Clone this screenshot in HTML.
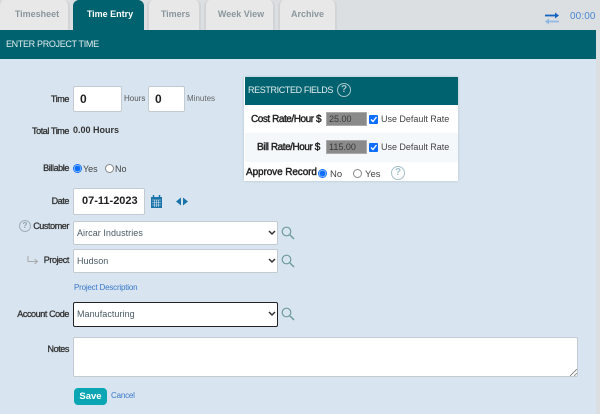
<!DOCTYPE html>
<html><head><meta charset="utf-8">
<style>
*{box-sizing:border-box}
html,body{margin:0;padding:0;width:600px;height:414px;overflow:hidden;background:#dcdfe2;font-family:"Liberation Sans",sans-serif}
#w{position:absolute;left:0;top:0;width:600px;height:414px;filter:blur(.25px)}
.a{position:absolute;white-space:nowrap}
.tab{position:absolute;top:0;height:30px;background:#e8e8e8;border:2px solid #d2d4d6;border-top:0;border-bottom:0;border-top-left-radius:6px;border-top-right-radius:6px;text-align:center;font-size:9px;font-weight:bold;color:#8a979d;line-height:28px}
.lbl{position:absolute;font-size:9px;color:#333;white-space:nowrap;text-align:right;right:531px;letter-spacing:-.4px;-webkit-text-stroke:.3px #333}
.b{font-size:10px;color:#222;-webkit-text-stroke:.4px #222}
.inp{position:absolute;background:#fff;border:1px solid #c4cbd0;border-radius:2px}
.sel{position:absolute;left:73px;width:205px;background:#fff;border:1px solid #c4cbd0;border-radius:2px;font-size:9px;letter-spacing:.05px;color:#4a5a64;line-height:23px;padding-left:3px}
</style></head><body><div id="w">
<div class="tab" style="left:-2px;width:72px;padding-left:6px">Timesheet</div>
<div class="tab" style="left:73px;width:71px;background:#00626f;border-color:#00626f;color:#fff;padding-left:3px">Time Entry</div>
<div class="tab" style="left:147px;width:54px;padding-left:3px">Timers</div>
<div class="tab" style="left:204px;width:71px;padding-left:3px">Week View</div>
<div class="tab" style="left:278px;width:59px">Archive</div>
<svg class="a" style="left:544px;top:11px" width="16" height="16" viewBox="0 0 16 16"><path d="M1 4.500H12" stroke="#1565c0" stroke-width="1.800"/><path d="M11 1.500L15 4.500L11 7.500Z" fill="#1565c0"/><path d="M5 10.500H15" stroke="#90b8e0" stroke-width="1.800"/><path d="M5 7.500L1 10.500L5 13.500Z" fill="#90b8e0"/></svg>
<div class="a" style="left:570px;top:11px;font-size:10px;color:#4a86d0;letter-spacing:.1px">00:00</div>
<div class="a" style="left:0;top:30px;width:596px;height:384px;background:#d8e5f1"></div>
<div class="a" style="left:0;top:30px;width:596px;height:29px;background:#00626f;color:#e4eef0;font-size:9px;line-height:28px;padding-left:6px;letter-spacing:-.33px">ENTER PROJECT TIME</div>

<div class="lbl" style="top:94px">Time</div>
<div class="inp" style="left:73px;top:86px;width:49px;height:26px;font-size:12px;font-weight:bold;color:#222;line-height:24px;padding-left:6px">0</div>
<div class="a" style="left:124px;top:94px;font-size:8px;color:#555">Hours</div>
<div class="inp" style="left:148px;top:86px;width:37px;height:26px;font-size:12px;font-weight:bold;color:#222;line-height:24px;padding-left:6px">0</div>
<div class="a" style="left:187px;top:94px;font-size:8px;color:#666">Minutes</div>
<div class="lbl" style="top:126px">Total Time</div>
<div class="a" style="left:73px;top:125px;font-size:9px;font-weight:bold;color:#333">0.00 Hours</div>

<div class="a" style="left:244px;top:77px;width:214px;height:104px;background:#fff;box-shadow:0 0 3px rgba(0,0,0,.15)"></div>
<div class="a" style="left:245px;top:77px;width:213px;height:28px;background:#00626f;color:#e4eef0;font-size:9px;line-height:27px;padding-left:3px;letter-spacing:-.38px">RESTRICTED FIELDS</div>
<div class="a" style="left:337px;top:83px;width:14px;height:14px;border:1.5px solid #a5c5cc;border-radius:50%;color:#a5c5cc;font-size:10px;font-weight:bold;line-height:11px;text-align:center">?</div>
<div class="a" style="left:245px;top:133px;width:213px;height:29px;background:#f5f8fa"></div>
<div class="a b" style="left:251px;top:114px;letter-spacing:-.45px">Cost Rate/Hour $</div>
<div class="a" style="left:326px;top:112px;width:41px;height:14px;background:#8a8a8a;border:1px solid #aaa;font-size:9px;color:#3a3a3a;line-height:12px;padding-left:2px">25.00</div>
<div class="a" style="left:369px;top:115px;width:9px;height:9px;background:#0d6efd;border-radius:1px"></div>
<svg class="a" style="left:369px;top:115px" width="9" height="9"><path d="M2 4.500L4 6.500L7.500 2" stroke="#fff" fill="none" stroke-width="1.300"/></svg>
<div class="a" style="left:381px;top:114px;font-size:9px;letter-spacing:-.02px;color:#444">Use Default Rate</div>
<div class="a b" style="left:257px;top:142px;letter-spacing:-.45px">Bill Rate/Hour $</div>
<div class="a" style="left:326px;top:140px;width:41px;height:14px;background:#8a8a8a;border:1px solid #aaa;font-size:9px;color:#3a3a3a;line-height:12px;padding-left:2px">115.00</div>
<div class="a" style="left:369px;top:143px;width:9px;height:9px;background:#0d6efd;border-radius:1px"></div>
<svg class="a" style="left:369px;top:143px" width="9" height="9"><path d="M2 4.500L4 6.500L7.500 2" stroke="#fff" fill="none" stroke-width="1.300"/></svg>
<div class="a" style="left:381px;top:142px;font-size:9px;letter-spacing:-.02px;color:#444">Use Default Rate</div>
<div class="a b" style="left:246px;top:167px;letter-spacing:-.1px">Approve Record</div>
<div class="a" style="left:318px;top:169px;width:9px;height:9px;border:1px solid #0d6efd;border-radius:50%;background:radial-gradient(circle,#0d6efd 2.800px,#fff 3.300px)"></div>
<div class="a" style="left:330px;top:169px;font-size:9.5px;color:#444">No</div>
<div class="a" style="left:353px;top:169px;width:9px;height:9px;border:1px solid #888;border-radius:50%;background:#fff"></div>
<div class="a" style="left:365px;top:169px;font-size:9.5px;color:#444">Yes</div>
<div class="a" style="left:391px;top:166px;width:14px;height:14px;border:1.5px solid #a5c0cc;border-radius:50%;color:#a5c0cc;font-size:10px;font-weight:bold;line-height:11px;text-align:center">?</div>

<div class="lbl" style="top:163px">Billable</div>
<div class="a" style="left:73px;top:164px;width:9px;height:9px;border:1px solid #0d6efd;border-radius:50%;background:radial-gradient(circle,#0d6efd 2.800px,#fff 3.300px)"></div>
<div class="a" style="left:83px;top:164px;font-size:9px;color:#444">Yes</div>
<div class="a" style="left:105px;top:164px;width:9px;height:9px;border:1px solid #888;border-radius:50%;background:#fff"></div>
<div class="a" style="left:115px;top:164px;font-size:9px;color:#444">No</div>

<div class="lbl" style="top:196px">Date</div>
<div class="inp" style="left:73px;top:188px;width:72px;height:27px;font-size:11px;font-weight:bold;color:#222;line-height:25px;padding-left:8px">07-11-2023</div>
<svg class="a" style="left:151px;top:195px" width="12" height="13" viewBox="0 0 12 13"><path d="M0 2H11V13H0Z" fill="#1a74a8"/><path d="M2.500 0V3M8.500 0V3" stroke="#1a74a8" stroke-width="1.500"/><path d="M1 5H10M1 7.500H10M1 10H10M3.500 5V12M5.500 5V12M7.500 5V12" stroke="#d8e5f1" stroke-width=".6"/></svg>
<svg class="a" style="left:175px;top:197px" width="14" height="10" viewBox="0 0 14 10"><path d="M6 0.500V8.500L1 4.500Z" fill="#1a74a8"/><path d="M8 0.500V8.500L13 4.500Z" fill="#1a74a8"/></svg>

<div class="a" style="left:19px;top:220px;width:12px;height:12px;border:1px solid #a0b0b8;border-radius:50%;color:#8fa0a8;font-size:8px;font-weight:bold;line-height:10px;text-align:center">?</div>
<div class="lbl" style="top:221px">Customer</div>
<div class="sel" style="top:221px;height:24px">Aircar Industries</div>
<svg class="a" style="left:268px;top:230px" width="8" height="6"><path d="M1 1L4 4L7 1" stroke="#333" fill="none" stroke-width="1.500"/></svg>
<svg class="a" style="left:281px;top:226px" width="14" height="14" viewBox="0 0 14 14"><circle cx="5.500" cy="5.500" r="4.300" fill="none" stroke="#6f9b9f" stroke-width="1.200"/><path d="M9 9L13 13" stroke="#6f9b9f" stroke-width="1.500"/></svg>

<svg class="a" style="left:27px;top:255px" width="12" height="12" viewBox="0 0 12 12"><path d="M1 1V6.500H10M7.500 4L10.500 6.500L7.500 9" stroke="#a8a8a8" fill="none"/></svg>
<div class="lbl" style="top:255px">Project</div>
<div class="sel" style="top:249px;height:24px">Hudson</div>
<svg class="a" style="left:268px;top:258px" width="8" height="6"><path d="M1 1L4 4L7 1" stroke="#333" fill="none" stroke-width="1.500"/></svg>
<svg class="a" style="left:281px;top:254px" width="14" height="14" viewBox="0 0 14 14"><circle cx="5.500" cy="5.500" r="4.300" fill="none" stroke="#6f9b9f" stroke-width="1.200"/><path d="M9 9L13 13" stroke="#6f9b9f" stroke-width="1.500"/></svg>
<div class="a" style="left:74px;top:283px;font-size:8px;letter-spacing:-.2px;color:#3a78c8">Project Description</div>

<div class="lbl" style="top:309px">Account Code</div>
<div class="sel" style="top:302px;height:25px;border:1.5px solid #222;line-height:23px">Manufacturing</div>
<svg class="a" style="left:268px;top:311px" width="8" height="6"><path d="M1 1L4 4L7 1" stroke="#333" fill="none" stroke-width="1.500"/></svg>
<svg class="a" style="left:281px;top:307px" width="14" height="14" viewBox="0 0 14 14"><circle cx="5.500" cy="5.500" r="4.300" fill="none" stroke="#6f9b9f" stroke-width="1.200"/><path d="M9 9L13 13" stroke="#6f9b9f" stroke-width="1.500"/></svg>

<div class="lbl" style="top:344px">Notes</div>
<div class="inp" style="left:73px;top:337px;width:505px;height:40px"></div>
<svg class="a" style="left:570px;top:369px" width="7" height="7"><path d="M0 7L7 0M4 7L7 4" stroke="#777" stroke-width=".8"/></svg>
<div class="a" style="left:74px;top:388px;width:33px;height:17px;background:#0aa6b4;border-radius:4px;color:#fff;font-size:9.5px;font-weight:bold;line-height:17px;text-align:center">Save</div>
<div class="a" style="left:111px;top:391px;font-size:8px;letter-spacing:-.2px;color:#3a78c8">Cancel</div>
</div></body></html>
